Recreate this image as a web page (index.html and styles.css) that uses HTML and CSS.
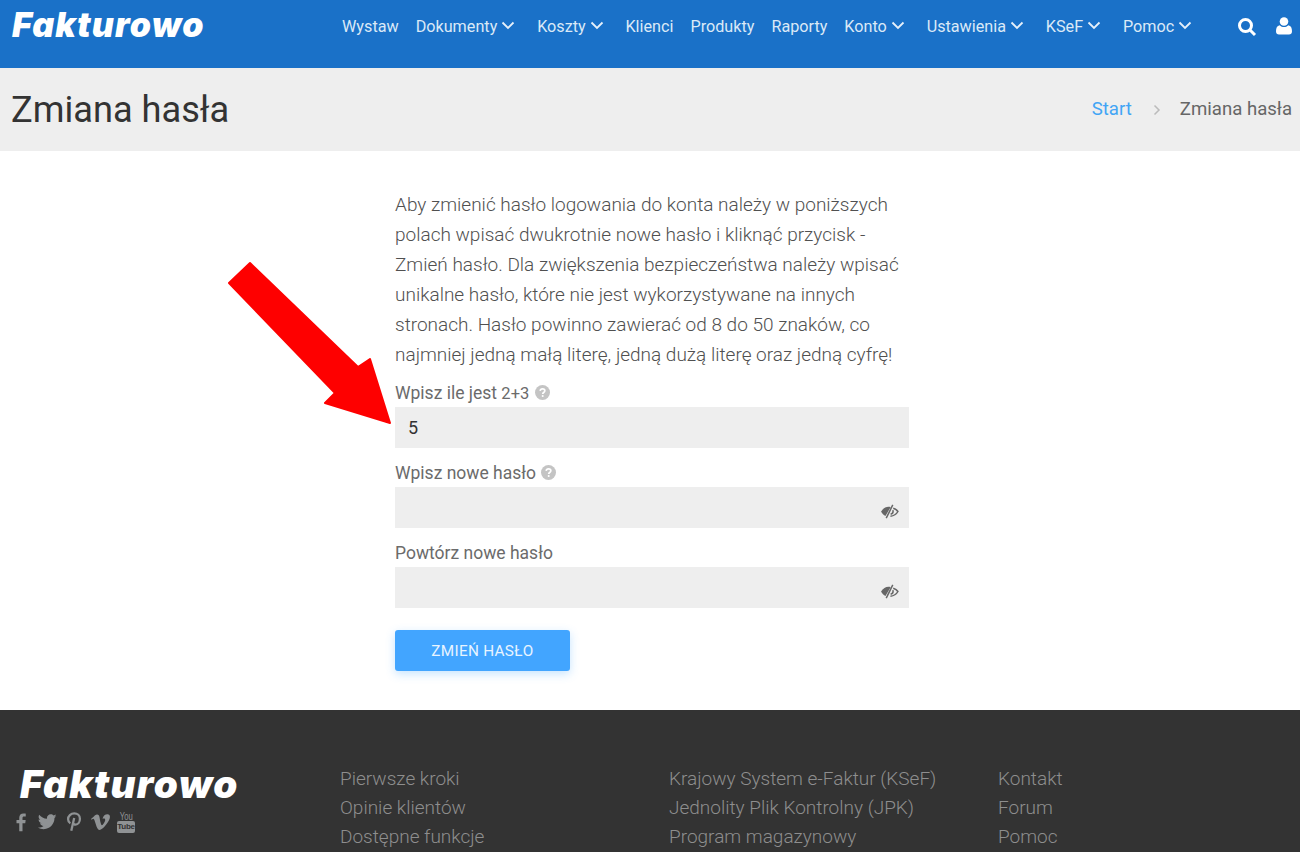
FILE: index.html
```html
<!DOCTYPE html>
<html lang="pl">

<head>
    <meta charset="UTF-8">
    <meta name="viewport" content="width=device-width, initial-scale=1.0">
    <title>Fakturowo - Zmiana hasła</title>
    <link rel="stylesheet" href="styles.css">
</head>

<body>
    <div class="topbar">
        <a class="logo">Fakturowo</a>
        <div class="nav">
            <a class="nav-item">Wystaw</a>
            <a class="nav-item has-menu">Dokumenty <svg class="chevron" viewBox="0 0 14 9"><path d="M1.5 1.5 7 7l5.500-5.500"/></svg></a>
            <a class="nav-item has-menu">Koszty <svg class="chevron" viewBox="0 0 14 9"><path d="M1.5 1.5 7 7l5.500-5.500"/></svg></a>
            <a class="nav-item">Klienci</a>
            <a class="nav-item">Produkty</a>
            <a class="nav-item">Raporty</a>
            <a class="nav-item has-menu">Konto <svg class="chevron" viewBox="0 0 14 9"><path d="M1.5 1.5 7 7l5.500-5.500"/></svg></a>
            <a class="nav-item has-menu">Ustawienia <svg class="chevron" viewBox="0 0 14 9"><path d="M1.5 1.5 7 7l5.500-5.500"/></svg></a>
            <a class="nav-item has-menu">KSeF <svg class="chevron" viewBox="0 0 14 9"><path d="M1.5 1.5 7 7l5.500-5.500"/></svg></a>
            <a class="nav-item has-menu">Pomoc <svg class="chevron" viewBox="0 0 14 9"><path d="M1.5 1.5 7 7l5.500-5.500"/></svg></a>
        </div>
        <div class="top-icons">
            <svg class="search-icon" viewBox="0 0 20 20"><circle cx="8.5" cy="8.5" r="6" /><path d="m13 13 5 5" /></svg>
            <svg class="user-icon" viewBox="0 0 16 18"><circle cx="8" cy="4.5" r="4.3" /><path d="M3.6 8.2C5 9.5 6.4 10 8 10s3-.5 4.4-1.800C14.800 8.600 16 10.800 16 14.200 16 16.300 14.800 17.500 13 17.500H3C1.200 17.500 0 16.300 0 14.200 0 10.800 1.200 8.600 3.600 8.200z" /></svg>
        </div>
    </div>

    <div class="title-bar">
        <h1>Zmiana hasła</h1>
        <div class="breadcrumb">
            <a class="crumb-link">Start</a>
            <svg class="crumb-sep" viewBox="0 0 8 12"><path d="m1.500 1.500 4.500 4.500-4.500 4.500"/></svg>
            <span>Zmiana hasła</span>
        </div>
    </div>

    <div class="content">
        <svg class="arrow" viewBox="0 0 170 170">
            <polygon points="27,6 6,26 112,136 102,146 167,166 147,102 135,110" />
        </svg>
        <div class="form-col">
            <p class="intro">Aby zmienić hasło logowania do konta należy w poniższych polach wpisać dwukrotnie nowe hasło i kliknąć przycisk - Zmień hasło. Dla zwiększenia bezpieczeństwa należy wpisać unikalne hasło, które nie jest wykorzystywane na innych stronach. Hasło powinno zawierać od 8 do 50 znaków, co najmniej jedną małą literę, jedną dużą literę oraz jedną cyfrę!</p>

            <label class="field-label">Wpisz ile jest <span class="captcha">2+3</span>
                <svg class="help-icon" viewBox="0 0 16 16"><circle cx="8" cy="8" r="8"/><path class="help-mark" d="M5.500 6.200C5.700 4.900 6.700 4.200 8 4.200c1.500 0 2.500.8 2.500 2 0 1.800-2.300 1.800-2.300 3.300"/><circle class="help-dot" cx="8.200" cy="11.800" r="1.100"/></svg>
            </label>
            <div class="field">5</div>

            <label class="field-label">Wpisz nowe hasło
                <svg class="help-icon" viewBox="0 0 16 16"><circle cx="8" cy="8" r="8"/><path class="help-mark" d="M5.500 6.200C5.700 4.900 6.700 4.200 8 4.200c1.500 0 2.500.8 2.500 2 0 1.800-2.300 1.800-2.300 3.300"/><circle class="help-dot" cx="8.200" cy="11.800" r="1.100"/></svg>
            </label>
            <div class="field">
                <svg class="eye-icon" viewBox="0 0 20 16"><path d="M1 8c2-3 5-5 8-5 .8 0 1.500.1 2.200.4L5.700 12.800C3.800 12 2.200 10.200 1 8z"/><path class="eye-line" d="M13.500 1 6.500 15"/><path class="eye-line" d="M14 4.500C16.200 5.300 18 6.500 19 8c-1.500 2.600-4.500 4.700-8 5"/><path class="eye-line" d="M13.600 6.500c.6 2-.4 3.800-2.400 4.500"/></svg>
            </div>

            <label class="field-label">Powtórz nowe hasło</label>
            <div class="field">
                <svg class="eye-icon" viewBox="0 0 20 16"><path d="M1 8c2-3 5-5 8-5 .8 0 1.500.1 2.200.4L5.700 12.800C3.800 12 2.200 10.200 1 8z"/><path class="eye-line" d="M13.500 1 6.500 15"/><path class="eye-line" d="M14 4.500C16.200 5.300 18 6.500 19 8c-1.500 2.600-4.500 4.700-8 5"/><path class="eye-line" d="M13.600 6.500c.6 2-.4 3.800-2.400 4.500"/></svg>
            </div>

            <button class="submit-btn">ZMIEŃ HASŁO</button>
        </div>
    </div>

    <div class="footer">
        <div class="footer-brand">
            <a class="logo logo-footer">Fakturowo</a>
            <div class="social">
                <svg viewBox="0 0 12 22" class="soc-fb"><path d="M7.800 22V12.500h3.300l.5-3.800H7.800V6.300c0-1.100.3-1.800 1.900-1.800h2V1.100C11.300 1 10.200.9 8.800.9 5.900.9 3.900 2.700 3.900 5.900v2.800H.6v3.800h3.300V22z"/></svg>
                <svg viewBox="0 0 24 20" class="soc-tw"><path d="M23.500 2.400c-.9.400-1.800.6-2.800.8 1-.6 1.800-1.500 2.100-2.700-.9.600-2 1-3.100 1.200C18.800.7 17.500.100 16.100.100c-2.700 0-4.800 2.200-4.800 4.800 0 .4 0 .8.100 1.100C7.400 5.800 3.800 3.900 1.500.9 1.100 1.600.8 2.400.8 3.300c0 1.700.9 3.200 2.100 4-.8 0-1.500-.2-2.200-.6v.1c0 2.300 1.700 4.300 3.900 4.700-.4.100-.8.200-1.300.2-.3 0-.6 0-.9-.1.600 1.900 2.400 3.300 4.500 3.300-1.600 1.300-3.700 2-5.900 2-.4 0-.8 0-1.100-.1 2.100 1.400 4.600 2.200 7.300 2.200 8.800 0 13.600-7.300 13.600-13.600v-.6c.9-.7 1.700-1.500 2.400-2.400z"/></svg>
                <svg viewBox="0 0 16 22" class="soc-pin"><path class="pin-line" d="M4 12.500C2.300 11.500 1.500 9.800 1.500 8 1.500 4.300 4.500 1.500 8.300 1.500c3.500 0 6.200 2.500 6.200 5.800 0 3.700-2 6.500-4.800 6.500-1.300 0-2.400-.8-2.600-1.800"/><path class="pin-line" d="M8.200 6.500 5 20.500"/></svg>
                <svg viewBox="0 0 22 20" class="soc-vm"><path d="M21.900 4.600c-.1 2.100-1.600 5-4.500 8.700-3 3.900-5.500 5.900-7.600 5.900-1.300 0-2.400-1.200-3.300-3.600L4.700 9.900C4 7.500 3.300 6.300 2.500 6.300c-.2 0-.8.400-1.800 1.100L0 6.400C1.100 5.400 2.200 4.500 3.300 3.500 4.800 2.200 5.900 1.500 6.700 1.400c1.800-.2 2.900 1 3.300 3.600.5 2.800.8 4.600 1 5.300.5 2.300 1.100 3.400 1.700 3.400.5 0 1.200-.8 2.200-2.300.9-1.500 1.500-2.700 1.500-3.500.1-1.300-.4-2-1.500-2-.5 0-1.100.1-1.600.4C14.400 2.700 16.400 1 19.200 1.100c2 .1 2.900 1.300 2.700 3.500z"/></svg>
                <span class="soc-yt"><span class="yt-top">You</span><span class="yt-box">Tube</span></span>
            </div>
        </div>
        <div class="footer-col">
            <a>Pierwsze kroki</a>
            <a>Opinie klientów</a>
            <a>Dostępne funkcje</a>
        </div>
        <div class="footer-col">
            <a>Krajowy System e-Faktur (KSeF)</a>
            <a>Jednolity Plik Kontrolny (JPK)</a>
            <a>Program magazynowy</a>
        </div>
        <div class="footer-col">
            <a>Kontakt</a>
            <a>Forum</a>
            <a>Pomoc</a>
        </div>
    </div>
</body>

</html>
```

FILE: styles.css
```css
body,
html {
    margin: 0;
    padding: 0;
    height: 100%;
    overflow: hidden;
    font-family: 'Roboto', Arial, sans-serif;
    background-color: white;
}

body {
    display: flex;
    flex-direction: column;
}

.topbar {
    background-color: #1a71c8;
    height: 68px;
    flex-shrink: 0;
    display: flex;
    align-items: flex-start;
    box-sizing: border-box;
    padding-left: 12px;
}

.logo {
    font-family: 'Inter', 'Open Sans', Arial, sans-serif;
    font-style: italic;
    font-weight: 900;
    font-size: 34px;
    line-height: 50px;
    letter-spacing: 1.1px;
    color: white;
    width: 330px;
    flex-shrink: 0;
}

.nav {
    display: flex;
    gap: 17px;
    height: 53px;
    align-items: center;
}

.nav-item {
    font-size: 16.200px;
    color: #dbe9f7;
    white-space: nowrap;
}

.has-menu {
    margin-right: 4.8px;
}

.chevron {
    width: 14px;
    height: 9px;
    vertical-align: 2px;
    fill: none;
    stroke: #e6f0fa;
    stroke-width: 1.8;
}

.top-icons {
    margin-left: auto;
    display: flex;
    align-items: center;
    gap: 19px;
    height: 54px;
    padding-right: 8px;
}

.search-icon {
    width: 20px;
    height: 20px;
    fill: none;
    stroke: white;
    stroke-width: 3;
}

.user-icon {
    width: 16px;
    height: 18px;
    fill: white;
    margin-top: -3px;
}

.title-bar {
    background-color: #eeeeee;
    height: 83px;
    flex-shrink: 0;
    display: flex;
    align-items: center;
    justify-content: space-between;
    box-sizing: border-box;
    padding: 0 8px 1px 11px;
}

h1 {
    margin: 0;
    font-size: 36.200px;
    font-weight: 400;
    color: #333;
}

.breadcrumb {
    display: flex;
    align-items: center;
    font-size: 18.600px;
    color: #666;
}

.crumb-link {
    color: #42a5f5;
}

.crumb-sep {
    width: 8px;
    height: 12px;
    margin: 2px 19px 0 21px;
    fill: none;
    stroke: #bbb;
    stroke-width: 1.5;
}

.content {
    position: relative;
    height: 559px;
    flex-shrink: 0;
    box-sizing: border-box;
    padding: 39px 0 0 395px;
}

.arrow {
    position: absolute;
    left: 223px;
    top: 106px;
    width: 170px;
    height: 170px;
    overflow: visible;
    fill: #fe0000;
    stroke: #fe0000;
    stroke-width: 2;
    stroke-linejoin: round;
}

.form-col {
    width: 514px;
    display: flex;
    flex-direction: column;
    align-items: flex-start;
}

.intro {
    margin: 0 0 10px;
    font-size: 19px;
    line-height: 30px;
    font-weight: 300;
    color: #505050;
}

.field-label {
    display: block;
    font-size: 17.500px;
    line-height: 27px;
    color: #6b6b6b;
}

.captcha {
    font-size: 16.500px;
}

.help-icon {
    width: 15px;
    height: 15px;
    margin-left: 1px;
    vertical-align: -1px;
    fill: #c4c4c4;
}

.help-mark {
    fill: none;
    stroke: white;
    stroke-width: 1.800;
}

.help-dot {
    fill: white;
}

.field {
    box-sizing: border-box;
    width: 514px;
    height: 41px;
    margin-bottom: 12px;
    padding: 0 10px 0 13px;
    background-color: #eeeeee;
    display: flex;
    align-items: center;
    justify-content: flex-end;
    font-size: 18px;
    color: #333;
}

.field:first-of-type {
    justify-content: flex-start;
}

.eye-icon {
    width: 19px;
    height: 15px;
    margin-top: 7px;
    fill: #666;
}

.eye-line {
    fill: none;
    stroke: #666;
    stroke-width: 1.600;
}

.submit-btn {
    width: 175px;
    height: 41px;
    margin-top: 10px;
    background-color: #42a5ff;
    color: #e8f4ff;
    border: none;
    border-radius: 3px;
    box-shadow: 0 3px 10px rgba(66, 165, 255, 0.3);
    font-family: inherit;
    font-size: 15.300px;
    letter-spacing: 0.3px;
}

.footer {
    background-color: #333333;
    flex: 1;
    display: flex;
    box-sizing: border-box;
    padding: 54px 0 0 20px;
}

.footer-brand {
    width: 320px;
    flex-shrink: 0;
}

.logo-footer {
    display: block;
    width: auto;
    font-size: 38.500px;
    line-height: 40px;
    letter-spacing: 1.3px;
}

.social {
    display: flex;
    align-items: center;
    gap: 9px;
    margin-left: -4px;
    margin-top: 6px;
    height: 24px;
    fill: #8f9294;
}

.social svg {
    height: 20px;
}

.soc-fb {
    width: 10px;
    margin-right: 3px;
}

.soc-tw {
    width: 19px;
}

.soc-pin {
    width: 16px;
}

.soc-vm {
    width: 19px;
    margin-right: -2px;
}

.pin-line {
    fill: none;
    stroke: #8f9294;
    stroke-width: 2.500;
}

.soc-yt {
    display: flex;
    flex-direction: column;
    align-items: center;
    width: 18px;
    color: #8f9294;
    font-family: 'Liberation Sans', Arial, sans-serif;
}

.yt-top {
    font-size: 11px;
    line-height: 10px;
    transform: scaleX(0.7);
}

.yt-box {
    background-color: #8f9294;
    color: #333;
    border-radius: 2px;
    width: 18px;
    text-align: center;
    font-weight: bold;
    font-size: 8px;
    line-height: 12px;
    letter-spacing: -0.3px;
    white-space: nowrap;
}

.footer-col {
    width: 329px;
    flex-shrink: 0;
    display: flex;
    flex-direction: column;
    font-size: 19px;
    line-height: 29px;
    font-weight: 300;
    color: #8e8e8e;
}
```
